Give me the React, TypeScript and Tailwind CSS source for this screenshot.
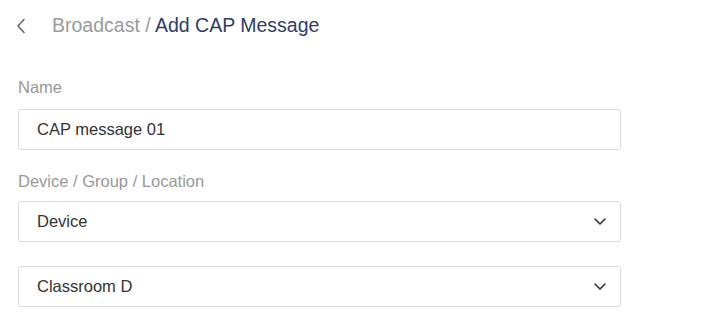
function Chevron() {
  return (
    <svg width="12" height="7" viewBox="0 0 12 7" fill="none" className="text-[#333]">
      <path d="M1 1l5 5 5-5" stroke="currentColor" strokeWidth="1.6" strokeLinecap="round" strokeLinejoin="round" />
    </svg>
  );
}

function SelectBox({ value }: { value: string }) {
  return (
    <div className="h-[41px] border border-[#dcdcdc] rounded-[3px] bg-white flex items-center justify-between pl-[18px] pr-[14px]">
      <span className="text-[16.5px] text-[#333]">{value}</span>
      <Chevron />
    </div>
  );
}

export default function App() {
  return (
    <div className="w-[727px] h-[328px] bg-white" style={{ fontFamily: '"Liberation Sans", Arial, sans-serif' }}>
      <div className="flex items-center h-[50px] pl-[16px] pt-[1px]">
        <svg width="10" height="16" viewBox="0 0 10 16" fill="none" className="text-[#666]">
          <path d="M8 1.5L2 8l6 6.5" stroke="currentColor" strokeWidth="1.5" strokeLinecap="round" strokeLinejoin="round" />
        </svg>
        <div className="ml-[26px] text-[19.5px]">
          <span className="text-[#9b9b9b]">Broadcast / </span>
          <span className="text-[#2f3d6b]">Add CAP Message</span>
        </div>
      </div>
      <div className="pl-[18px] w-[621px] pt-[28px]">
        <div className="text-[16.5px] text-[#999] leading-[18px]">Name</div>
        <div className="mt-[13px] h-[41px] border border-[#dcdcdc] rounded-[3px] flex items-center pl-[18px] text-[16.5px] text-[#333]">
          CAP message 01
        </div>
        <div className="mt-[22px] text-[16.5px] text-[#999] leading-[18px]">Device / Group / Location</div>
        <div className="mt-[11px]">
          <SelectBox value="Device" />
        </div>
        <div className="mt-[24px]">
          <SelectBox value="Classroom D" />
        </div>
      </div>
    </div>
  );
}
